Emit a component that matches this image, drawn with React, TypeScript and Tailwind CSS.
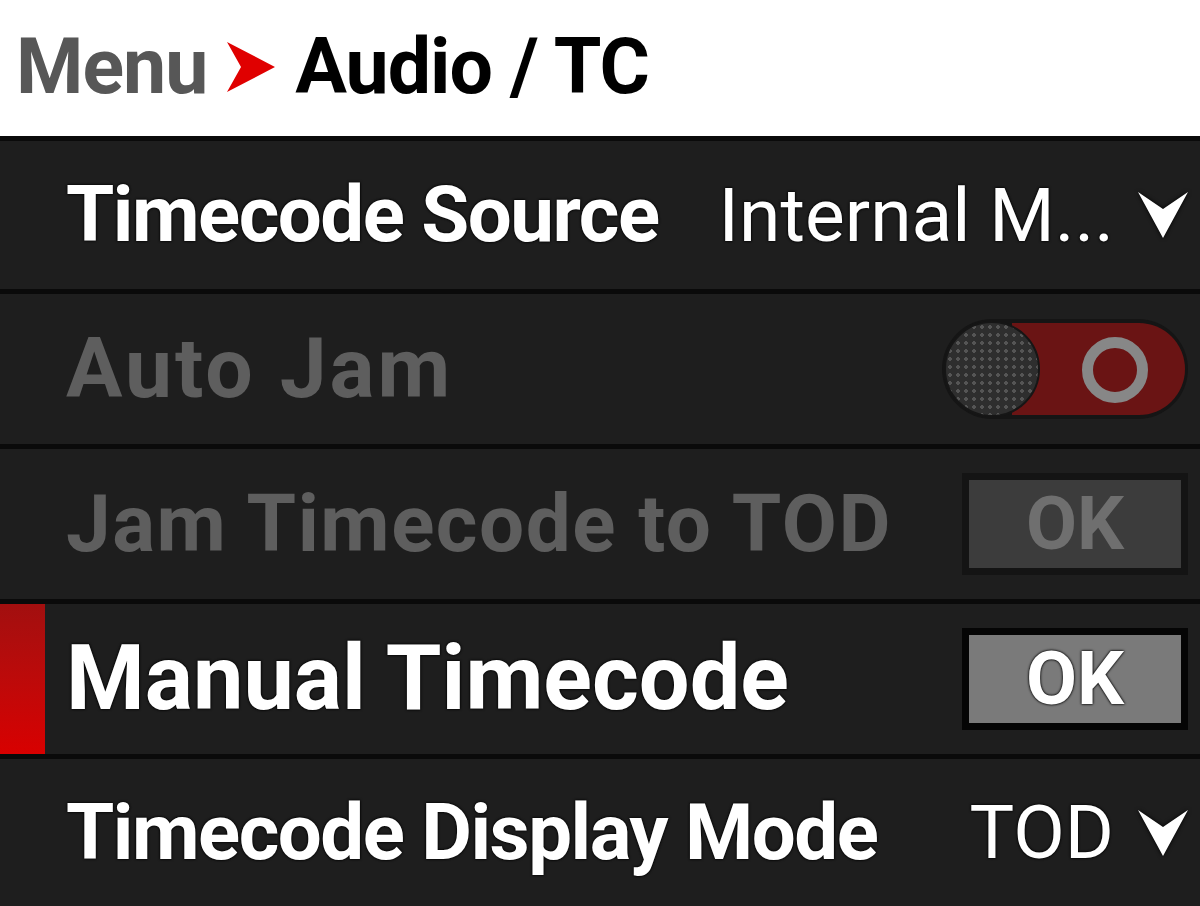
import React from 'react'

const glow = '[text-shadow:0_0_3px_#000,0_0_2px_#000]'

function Chevron() {
  return (
    <svg width="50" height="46" viewBox="0 0 50 46" className="drop-shadow-[0_0_2px_#000]">
      <polygon points="0,0 25,17 50,0 25,46" fill="#fff" />
    </svg>
  )
}

function Toggle() {
  return (
    <div className="relative w-[246px] h-[100px] rounded-full bg-[#151515] flex items-center">
      <div className="absolute left-[70px] right-[3px] top-[4px] bottom-[4px] rounded-r-full bg-[#6a1414]" />
      <div
        className="relative ml-[2px] w-[96px] h-[96px] rounded-full bg-[#2e2e2e] border-[2px] border-[#161616]"
        style={{
          backgroundImage: 'radial-gradient(circle, #555 1.6px, transparent 2px)',
          backgroundSize: '8px 8px',
        }}
      />
      <div className="absolute left-[140px] top-[18px] w-[66px] h-[66px] rounded-full border-[11px] border-[#878787]" />
    </div>
  )
}

function OkButton({ active }: { active?: boolean }) {
  return (
    <div className={`w-[226px] h-[102px] p-[7px] ${active ? 'bg-[#050505]' : 'bg-[#141414]'}`}>
      <div
        className={`w-full h-full flex items-center justify-center font-bold text-[74px] leading-none ${
          active ? 'bg-[#7a7a7a] text-white ' + glow : 'bg-[#3c3c3c] text-[#6f6f6f]'
        }`}
      >
        OK
      </div>
    </div>
  )
}

function Row({ children, h, selected }: { children: React.ReactNode; h: string; selected?: boolean }) {
  return (
    <div className={`relative flex items-center justify-between bg-[#1e1e1e] pl-[66px] pr-[12px] ${h}`}>
      {selected && <div className="absolute left-0 top-0 bottom-0 w-[45px] bg-gradient-to-b from-[#a20f0f] to-[#d80000]" />}
      {children}
    </div>
  )
}

export default function App() {
  return (
    <div className="w-[1200px] h-[906px] bg-[#0a0a0a] flex flex-col gap-[5px] overflow-hidden" style={{ fontFamily: 'Roboto, "Liberation Sans", sans-serif' }}>
      <div className="h-[136px] bg-white flex items-center pl-[16px] pb-[2px] shrink-0">
        <span className="font-bold text-[77px] leading-none text-[#575757] tracking-[-1px]">Menu</span>
        <svg width="48" height="50" viewBox="0 0 48 50" className="ml-[20px] mr-[20px]">
          <polygon points="0,0 48,25 0,50 14,25" fill="#e00000" />
        </svg>
        <span className="font-bold text-[77px] leading-none text-black tracking-[-1px]">Audio / TC</span>
      </div>

      <Row h="h-[148px]">
        <span className={`font-bold text-[78px] leading-none text-white tracking-[-1.5px] ${glow}`}>Timecode Source</span>
        <div className="flex items-center gap-[24px]">
          <span className={`text-[75px] leading-none text-white ${glow}`}>Internal M...</span>
          <Chevron />
        </div>
      </Row>

      <Row h="h-[150px]">
        <span className="font-bold text-[84px] leading-none text-[#5e5e5e] tracking-[3px]">Auto Jam</span>
        <Toggle />
      </Row>

      <Row h="h-[150px]">
        <span className="font-bold text-[80px] leading-none text-[#5e5e5e] tracking-[1.5px]">Jam Timecode to TOD</span>
        <OkButton />
      </Row>

      <Row h="h-[150px]" selected>
        <span className={`font-bold text-[90px] leading-none text-white ${glow}`}>Manual Timecode</span>
        <OkButton active />
      </Row>

      <Row h="h-[147px]">
        <span className={`font-bold text-[78px] leading-none text-white tracking-[-1.5px] ${glow}`}>Timecode Display Mode</span>
        <div className="flex items-center gap-[24px]">
          <span className={`text-[75px] leading-none text-white ${glow}`}>TOD</span>
          <Chevron />
        </div>
      </Row>
    </div>
  )
}
